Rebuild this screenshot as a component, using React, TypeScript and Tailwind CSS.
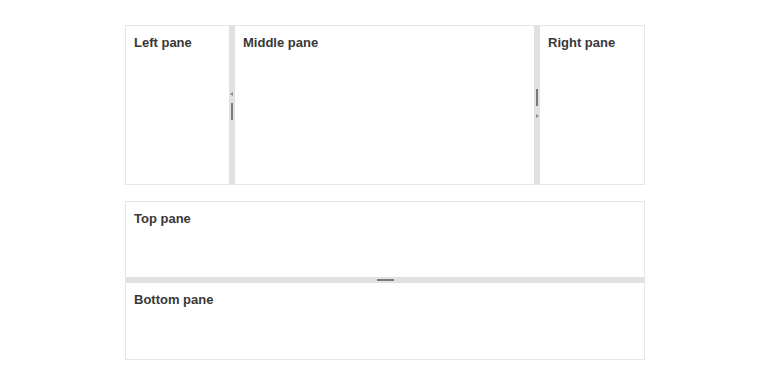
const font = { fontFamily: '"Liberation Sans", Arial, sans-serif' }

function Pane({ title, className = '' }: { title: string; className?: string }) {
  return (
    <div className={`px-2 pt-[9px] pb-2 bg-white ${className}`}>
      <h3 className="text-[13px] leading-[16px] font-bold text-[#383838]">{title}</h3>
    </div>
  )
}

function VSplitter({ arrow }: { arrow: 'left' | 'right' }) {
  return (
    <div className="relative w-[6px] shrink-0 bg-[#e1e1e1]">
      {arrow === 'left' ? (
        <>
          <span className="absolute left-[1px] top-[66px] w-0 h-0 border-y-[2px] border-y-transparent border-r-[3px] border-r-[#8c8c8c]" />
          <span className="absolute left-[2px] top-[77px] w-[2px] h-[17px] bg-[#7a7a7a]" />
        </>
      ) : (
        <>
          <span className="absolute left-[2px] top-[63px] w-[2px] h-[17px] bg-[#7a7a7a]" />
          <span className="absolute left-[2px] top-[88px] w-0 h-0 border-y-[2px] border-y-transparent border-l-[3px] border-l-[#8c8c8c]" />
        </>
      )}
    </div>
  )
}

export default function App() {
  return (
    <div className="min-h-screen bg-white pt-[25px]" style={font}>
      <div className="mx-auto w-[520px] flex flex-col gap-4">
        <div className="flex h-[160px] border border-[#e6e6e6]">
          <Pane title="Left pane" className="w-[103px] shrink-0" />
          <VSplitter arrow="left" />
          <Pane title="Middle pane" className="flex-1" />
          <VSplitter arrow="right" />
          <Pane title="Right pane" className="w-[104px] shrink-0" />
        </div>
        <div className="flex flex-col h-[159px] border border-[#e6e6e6]">
          <Pane title="Top pane" className="h-[75px] shrink-0" />
          <div className="h-[6px] shrink-0 bg-[#e1e1e1] flex items-center justify-center">
            <span className="block w-[17px] h-[2px] bg-[#7a7a7a]" />
          </div>
          <Pane title="Bottom pane" className="flex-1" />
        </div>
      </div>
    </div>
  )
}
